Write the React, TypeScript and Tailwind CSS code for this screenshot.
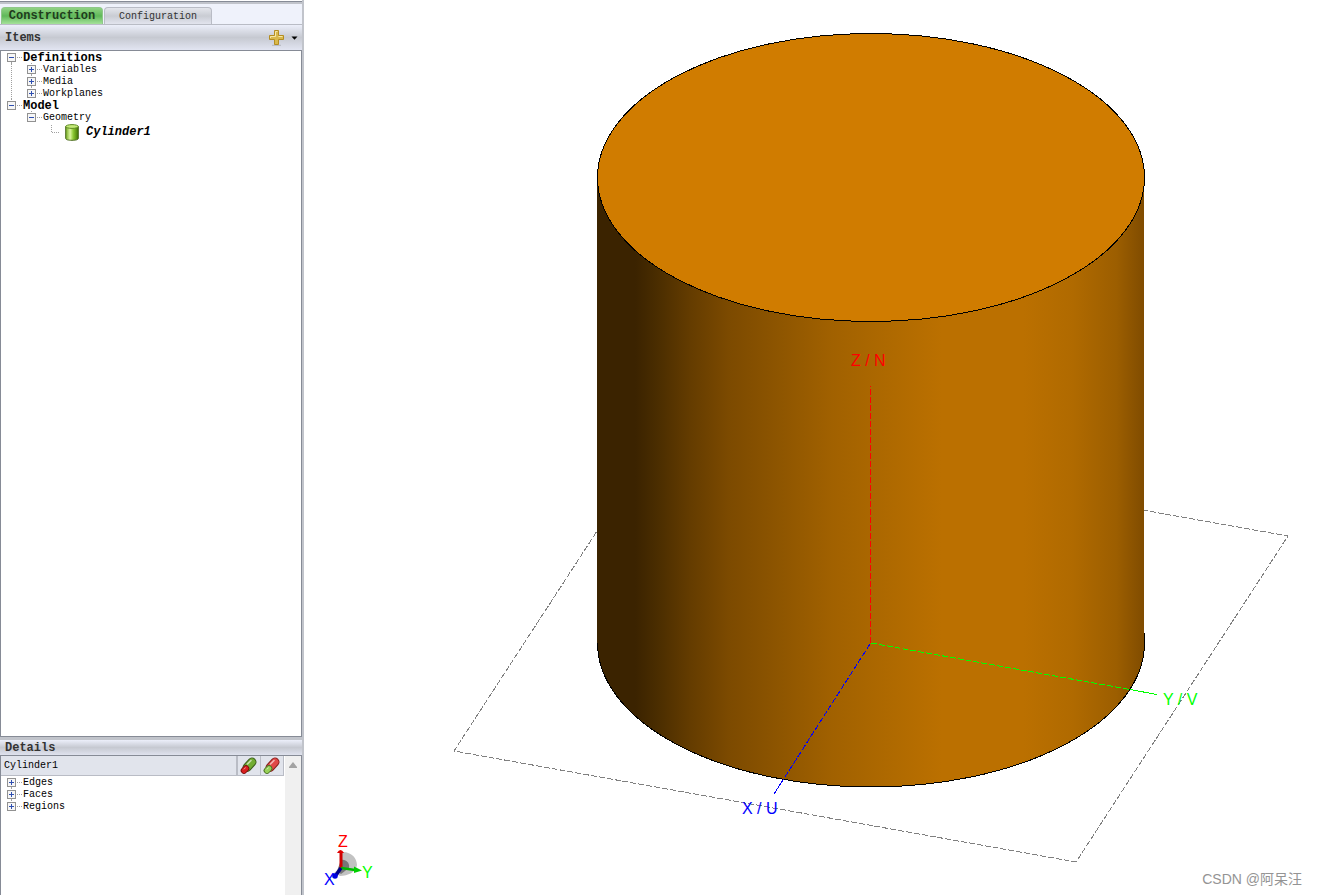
import React, { useState } from 'react';

type Node = { label: string; children?: Node[]; bold?: boolean; part?: boolean };

const items: Node[] = [
    {
        label: 'Definitions',
        bold: true,
        children: [
            { label: 'Variables', children: [] },
            { label: 'Media', children: [] },
            { label: 'Workplanes', children: [] },
        ],
    },
    {
        label: 'Model',
        bold: true,
        children: [{ label: 'Geometry', children: [{ label: 'Cylinder1', part: true }] }],
    },
];

const details: Node[] = [
    { label: 'Edges', children: [] },
    { label: 'Faces', children: [] },
    { label: 'Regions', children: [] },
];

// expander box with the dotted connector running through it
function Expander({ open, up, down }: { open: boolean; up: boolean; down: boolean }) {
    return (
        <svg width="20" height="12" viewBox="0 0 20 12" shapeRendering="crispEdges" aria-hidden="true">
            <path
                d={(up ? 'M8.5 0V2' : '') + (down ? 'M8.5 11V12' : '') + 'M14 6.5H19'}
                stroke="#a0a0a0"
                strokeDasharray="1 1"
            />
            <rect x="4.5" y="2.5" width="8" height="8" rx="1" fill="#f6f6f6" stroke="#919191" />
            <path d={'M6 6.5H11' + (open ? '' : 'M8.5 4V9')} stroke="#2f4fb0" />
        </svg>
    );
}

function CylinderIcon() {
    return (
        <svg width="14" height="17" viewBox="0 0 14 17" aria-hidden="true">
            <defs>
                <linearGradient id="part">
                    <stop offset="0" stopColor="#6fa81c" />
                    <stop offset="0.35" stopColor="#dcf5a0" />
                    <stop offset="0.6" stopColor="#8cc832" />
                    <stop offset="1" stopColor="#3f7400" />
                </linearGradient>
            </defs>
            <path d="M.7 2.500v12c0 1.200 2.700 1.800 6.300 1.800s6.300-.6 6.300-1.800v-12z" fill="url(#part)" stroke="#4c6a20" />
            <ellipse cx="7" cy="2.500" rx="6.300" ry="1.900" fill="#c4ea78" stroke="#5f8a24" />
        </svg>
    );
}

function TreeItem({ node, depth, last, first }: { node: Node; depth: number; last: boolean; first: boolean }) {
    const [open, setOpen] = useState(!!node.children?.length);

    if (node.part) {
        return (
            <li className="flex h-[18px] items-center">
                <svg width="18" height="18" viewBox="0 0 18 18" shapeRendering="crispEdges" aria-hidden="true">
                    <path d="M8.5 2V9.5H17" fill="none" stroke="#a0a0a0" strokeDasharray="1 1" />
                </svg>
                <span className="ml-1 mr-[7px]">
                    <CylinderIcon />
                </span>
                <span className="text-xs font-bold italic leading-[14px]">{node.label}</span>
            </li>
        );
    }

    return (
        <li>
            <div className="flex h-3 items-start">
                <button type="button" aria-label={'Toggle ' + node.label} onClick={() => setOpen(!open)}>
                    <Expander open={open} up={!(first && depth === 0)} down={!last} />
                </button>
                <span className={node.bold ? 'text-xs font-bold leading-[14px]' : 'text-[10px] leading-[14px]'}>
                    {node.label}
                </span>
            </div>
            {open && !!node.children?.length && (
                <div className="flex">
                    <div className="flex w-5 shrink-0">
                        {!last && <div className="ml-2 border-l border-dotted border-[#a0a0a0]" />}
                    </div>
                    <Tree nodes={node.children} depth={depth + 1} />
                </div>
            )}
        </li>
    );
}

function Tree({ nodes, depth = 0 }: { nodes: Node[]; depth?: number }) {
    return (
        <ul>
            {nodes.map((n, i) => (
                <TreeItem key={n.label} node={n} depth={depth} first={i === 0} last={i === nodes.length - 1} />
            ))}
        </ul>
    );
}

function Capsule({ body, tip, edge, tipEdge }: { body: string; tip: string; edge: string; tipEdge: string }) {
    return (
        <svg width="20" height="18" viewBox="0 0 20 18" aria-hidden="true">
            <g strokeLinecap="round">
                <path d="M8 10.5L13 5" stroke={edge} strokeWidth="9" />
                <path d="M8 10.5L13 5" stroke={body} strokeWidth="7" />
                <path d="M8.500 7L12 3.5" stroke="#fff" strokeOpacity="0.6" strokeWidth="1.6" />
                <path d="M5 13.5L7 11.5" stroke={tipEdge} strokeWidth="6.6" />
                <path d="M5 13.5L7 11.5" stroke={tip} strokeWidth="4.8" />
                <path d="M5 12L6.5 10.8" stroke="#fff" strokeOpacity="0.5" />
            </g>
        </svg>
    );
}

function Sidebar() {
    const [tab, setTab] = useState('Construction');

    return (
        <aside className="flex w-[304px] shrink-0 flex-col border-r-2 border-[#c1c4cb] bg-[#c1c4cb] font-['Liberation_Mono','DejaVu_Sans_Mono',monospace] text-black">
            <div className="h-0.5 shrink-0 border-b border-[#868b96] bg-white" />

            {/* Tabs */}
            <div role="tablist" className="mt-0.5 flex h-[21px] shrink-0 items-end border-b border-[#b9bcc5] bg-[#eff2fb] pl-px">
                {['Construction', 'Configuration'].map((name) => (
                    <button
                        key={name}
                        type="button"
                        role="tab"
                        aria-selected={tab === name}
                        onClick={() => setTab(name)}
                        className={
                            tab === name
                                ? 'mr-px h-[17px] w-[102px] rounded-t border border-b-0 border-[#8fc789] bg-linear-to-b from-[#8fd283] via-[#5fb858] to-[#a4e29a] text-center text-xs font-bold leading-4 text-[#1f3d1d]'
                                : 'mr-px h-[17px] w-[108px] rounded-t border border-b-0 border-[#b9bcc5] bg-linear-to-b from-[#e4e6ec] via-[#c9ccd3] to-[#e2e4ee] text-center text-[10px] leading-[18px] text-[#333]'
                        }
                    >
                        {name}
                    </button>
                ))}
            </div>

            {/* Items */}
            <div className="flex h-[25px] shrink-0 items-center bg-linear-to-b from-[#eceffa] from-0% via-[#c6c9d1] via-50% to-[#e2e5f2] pl-[5px] pr-1">
                <h2 className="flex-1 text-xs font-bold text-[#333]">Items</h2>
                <button type="button" aria-label="Add item" className="mr-1.5">
                    <svg width="17" height="17" viewBox="0 0 17 17">
                        <path d="M4 16.3h9" stroke="#b4b7bf" />
                        <path d="M6.5 1.5h4v5h5v4h-5v5h-4v-5h-5v-4h5z" fill="#d9b94c" stroke="#b48d20" />
                        <path d="M7.5 7.5V2.5h2M2.5 9V7.5h5M10.5 7.5h4" fill="none" stroke="#f6e8a8" />
                    </svg>
                </button>
                <button type="button" aria-label="Item options">
                    <svg width="7" height="4" viewBox="0 0 7 4">
                        <path d="M.5 0.5h6L3.5 3.8z" fill="#000" />
                    </svg>
                </button>
            </div>
            <div className="min-h-0 flex-1 border border-[#868b96] bg-white pl-0.5">
                <Tree nodes={items} />
            </div>

            {/* Details */}
            <div className="mt-[3px] flex h-[15px] shrink-0 items-center bg-linear-to-b from-[#eceffa] via-[#c6c9d1] to-[#dfe2ee] pl-[5px]">
                <h2 className="text-xs font-bold leading-3 text-[#333]">Details</h2>
            </div>
            <div className="flex h-[140px] shrink-0 border border-b-0 border-[#868b96] bg-white">
                <div className="flex-1">
                    <div className="mr-px flex h-5 border-b border-[#b9bcc5] bg-[#e1e4ec]">
                        <span className="flex-1 pl-[3px] text-[10px] leading-5">Cylinder1</span>
                        <button type="button" aria-label="Show part" className="flex w-6 items-center justify-center border-l-2 border-[#b9bcc5]">
                            <Capsule body="#72ad33" edge="#3b5c1c" tip="#d81f1f" tipEdge="#7c0e0e" />
                        </button>
                        <button type="button" aria-label="Hide part" className="flex w-6 items-center justify-center border-x border-[#b9bcc5]">
                            <Capsule body="#e04848" edge="#86201c" tip="#98d058" tipEdge="#4c7424" />
                        </button>
                    </div>
                    <div className="pl-0.5">
                        <Tree nodes={details} />
                    </div>
                </div>
                <div className="flex w-4 justify-center bg-[#f0f0f0] pt-1.5">
                    <svg width="8" height="6" viewBox="0 0 8 6" aria-hidden="true">
                        <path d="M4 0l4 5v1H0V5z" fill="#a3a3a3" />
                    </svg>
                </div>
            </div>
        </aside>
    );
}

function Scene() {
    return (
        <svg viewBox="0 0 1013 895" className="h-full w-full font-['Liberation_Sans',Arial,sans-serif]">
            <defs>
                <linearGradient id="side">
                    <stop offset="0" stopColor="#3b2300" />
                    <stop offset="0.07" stopColor="#3b2300" />
                    <stop offset="0.11" stopColor="#4a2d00" />
                    <stop offset="0.17" stopColor="#643c00" />
                    <stop offset="0.24" stopColor="#7c4a00" />
                    <stop offset="0.34" stopColor="#8f5600" />
                    <stop offset="0.43" stopColor="#a16100" />
                    <stop offset="0.53" stopColor="#ae6900" />
                    <stop offset="0.63" stopColor="#bb7000" />
                    <stop offset="0.78" stopColor="#bb7000" />
                    <stop offset="0.87" stopColor="#b06a00" />
                    <stop offset="0.95" stopColor="#9c5e00" />
                    <stop offset="1" stopColor="#804c00" />
                </linearGradient>
            </defs>
            <g shapeRendering="crispEdges" fill="none">
                {/* Workplane */}
                <path d="M362 425L150 751L772 862L984 536Z" stroke="#808080" strokeDasharray="6 2" />

                {/* Cylinder */}
                <path d="M293 177V643A273.5 144 0 0 0 840 643V177Z" fill="url(#side)" />
                <path d="M293.5 643A273.5 144 0 0 0 840.5 643V633" stroke="#000" />
                <ellipse cx="567" cy="177.5" rx="273.5" ry="144" fill="#d07c00" stroke="#000" />

                {/* Axes */}
                <path d="M566.5 643V386" stroke="#f00" strokeDasharray="6 2" />
                <path d="M567 643L826 689.5" stroke="#0f0" strokeDasharray="6 2" />
                <path d="M826 689.5L853 694.5" stroke="#0f0" />
                <path d="M566 644L479 780" stroke="#00f" strokeDasharray="6 2" />
                <path d="M479 780L470 794" stroke="#00f" />
            </g>
            <g fontSize="16">
                <text x="547" y="366" fill="#f00">Z / N</text>
                <text x="859" y="705" fill="#0f0">Y / V</text>
                <text x="438" y="814" fill="#00f">X / U</text>
            </g>
        </svg>
    );
}

function Triad() {
    return (
        <svg width="60" height="60" viewBox="0 0 60 60" className="font-['Liberation_Sans',Arial,sans-serif]" aria-hidden="true">
            <path d="M21 22C31 21 37 28 37 35C36 42 28 46 20 46L14 43L21 37Z" fill="#c2c2c2" />
            <path d="M21 30C26 29 30 33 29 38L21 44L17 41Z" fill="#777" />
            <path d="M21 38V23" stroke="#d00000" strokeWidth="3" />
            <path d="M17 23Q20.5 17 24 23Z" fill="#e00000" />
            <path d="M21 38L35 40" stroke="#00b800" strokeWidth="2.5" />
            <path d="M34 36.5L42 40.5L34 43Z" fill="#00d000" />
            <path d="M21 38L16 45" stroke="#00008c" strokeWidth="3.5" />
            <circle cx="15" cy="46" r="2.8" fill="#0000e0" />
            <g fontSize="16">
                <text x="18" y="17" fill="#f00">Z</text>
                <text x="42" y="48" fill="#0f0">Y</text>
                <text x="4" y="55" fill="#00f">X</text>
            </g>
        </svg>
    );
}

export default function App() {
    return (
        <div className="flex h-screen overflow-hidden bg-white">
            <Sidebar />
            <main className="relative min-w-0 flex-1">
                <Scene />
                <div className="absolute bottom-[5px] left-4">
                    <Triad />
                </div>
                <div className="absolute bottom-1.5 right-[15px] font-['Liberation_Sans','Noto_Sans_CJK_SC',sans-serif] text-sm leading-5 text-[#949494]">
                    CSDN @阿呆汪
                </div>
            </main>
        </div>
    );
}
